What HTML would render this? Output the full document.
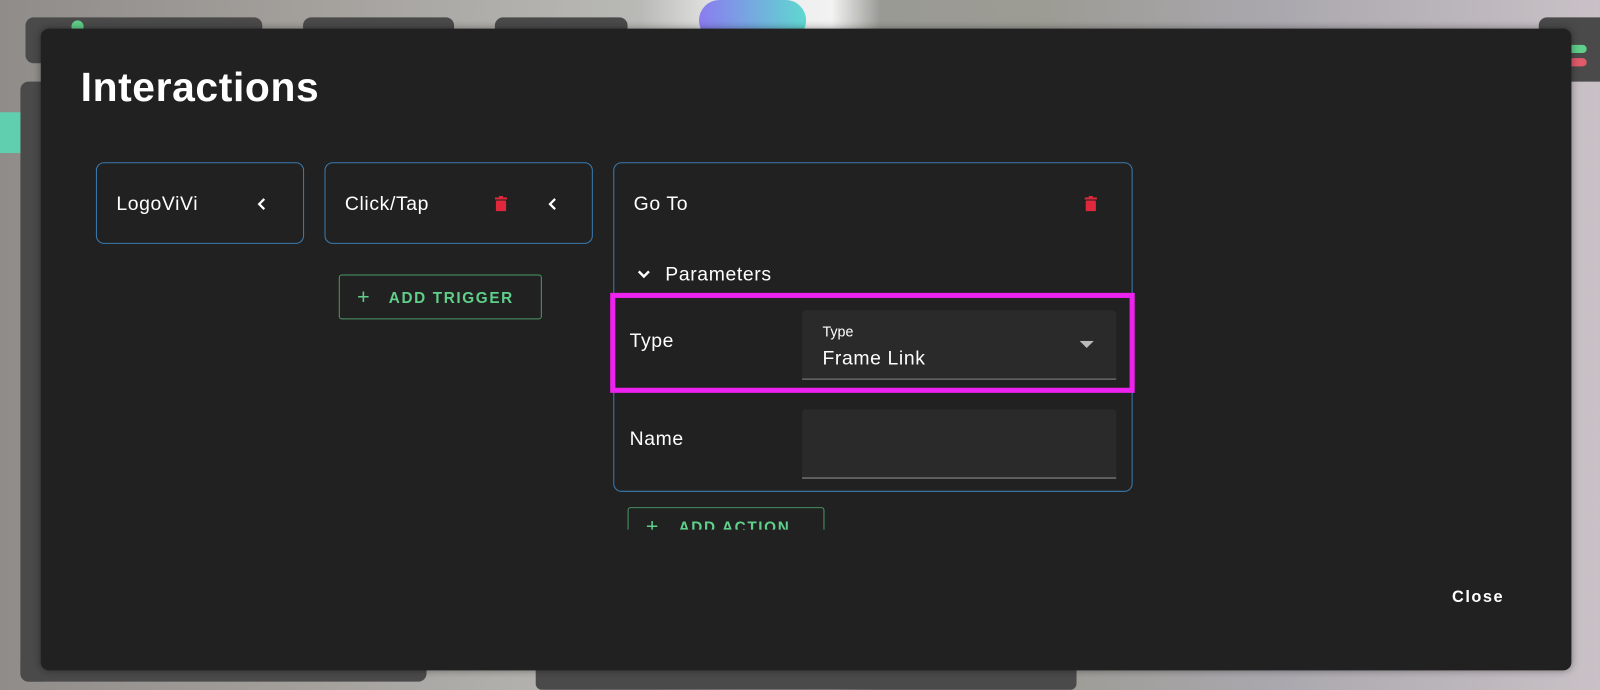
<!DOCTYPE html>
<html><head><meta charset="utf-8"><style>
*{box-sizing:border-box;margin:0;padding:0}
body{width:1600px;height:683px;overflow:hidden;position:relative;font-family:"Liberation Sans",sans-serif;
background:linear-gradient(90deg,#8f8c89 0%,#a4a19d 20%,#b9b9b6 40%,#e6e6e6 45%,#f2f2f2 52%,#9a9a95 55%,#9c9b94 65%,#aaa8ae 80%,#c9c1c6 100%);}
#w{position:absolute;left:0;top:0;width:1568px;height:670px;transform:scale(1.0204);transform-origin:0 0}
.abs{position:absolute}
.modal{left:40px;top:28px;width:1500px;height:629px;background:#212121;border-radius:8px;box-shadow:0 0 8px rgba(0,0,0,.4)}
.card{position:absolute;border:1px solid #3a7bb0;border-radius:8px;background:#212121;color:#fff;font-size:19px}
.t{position:absolute;color:#fff;white-space:nowrap}
.btn{position:absolute;border:1px solid #4a9a68;border-radius:3px}
.trash{position:absolute;width:12px;height:15px}
</style></head><body><div id="w">
<div class="abs" style="left:25px;top:17px;width:232px;height:45px;background:#4a4a4a;border-radius:8px"></div>
<div class="abs" style="left:70px;top:20px;width:12px;height:12px;background:#5fcf8a;border-radius:6px"></div>
<div class="abs" style="left:297px;top:17px;width:148px;height:45px;background:#4a4a4a;border-radius:8px"></div>
<div class="abs" style="left:485px;top:17px;width:130px;height:45px;background:#4a4a4a;border-radius:8px"></div>
<div class="abs" style="left:685px;top:0;width:105px;height:40px;background:linear-gradient(90deg,#8b7cf0,#5fd8d0);border-radius:50px"></div>
<div class="abs" style="left:1508px;top:17px;width:70px;height:63px;background:#4a4a4a;border-radius:8px"></div>
<div class="abs" style="left:1535px;top:44px;width:20px;height:8px;background:#5fcf8a;border-radius:4px"></div>
<div class="abs" style="left:1535px;top:57px;width:20px;height:8px;background:#e05a6a;border-radius:4px"></div>
<div class="abs" style="left:20px;top:80px;width:30px;height:588px;background:#4a4a4a;border-radius:8px"></div>
<div class="abs" style="left:0;top:110px;width:20px;height:40px;background:#5fcfb0"></div>
<div class="abs" style="left:20px;top:640px;width:398px;height:28px;background:#4a4a4a;border-radius:8px"></div>
<div class="abs" style="left:525px;top:640px;width:530px;height:36px;background:#4a4a4a;border-radius:6px"></div>

<div class="abs modal"></div>
<div class="t" style="left:79px;top:64px;font-size:40px;font-weight:bold;letter-spacing:.6px">Interactions</div>

<div class="card" style="left:94px;top:159px;width:204px;height:80px"></div>
<div class="t" style="left:114px;top:190px;font-size:19px;letter-spacing:.6px">LogoViVi</div>
<svg class="abs" style="left:252px;top:194px" width="10" height="12"><path d="M7 1 L2 6 L7 11" stroke="#fff" stroke-width="2.2" fill="none"/></svg>

<div class="card" style="left:318px;top:159px;width:263px;height:80px"></div>
<div class="t" style="left:338px;top:190px;font-size:19px;letter-spacing:.6px">Click/Tap</div>
<svg class="trash" style="left:485px;top:192px" viewBox="0 0 12 15"><rect x="0" y="1.5" width="12" height="2" fill="#e0283c"/><rect x="4" y="0" width="4" height="2" fill="#e0283c"/><rect x="1" y="4.5" width="10" height="10.5" rx="1" fill="#e0283c"/></svg>
<svg class="abs" style="left:537px;top:194px" width="10" height="12"><path d="M7 1 L2 6 L7 11" stroke="#fff" stroke-width="2.2" fill="none"/></svg>

<div class="btn" style="left:332px;top:269px;width:199px;height:44px"></div>
<div class="t" style="left:350px;top:280px;font-size:21px;color:#5fcf8a">+</div>
<div class="t" style="left:381px;top:284px;font-size:15px;font-weight:bold;letter-spacing:1.6px;color:#5fcf8a">ADD TRIGGER</div>

<div class="card" style="left:601px;top:159px;width:509px;height:323px"></div>
<div class="t" style="left:621px;top:190px;font-size:19px;letter-spacing:.6px">Go To</div>
<svg class="trash" style="left:1063px;top:192px" viewBox="0 0 12 15"><rect x="0" y="1.5" width="12" height="2" fill="#e0283c"/><rect x="4" y="0" width="4" height="2" fill="#e0283c"/><rect x="1" y="4.5" width="10" height="10.5" rx="1" fill="#e0283c"/></svg>
<svg class="abs" style="left:624px;top:264px" width="14" height="10" viewBox="0 0 14 10"><path d="M2 2 L7 7 L12 2" stroke="#fff" stroke-width="2.4" fill="none"/></svg>
<div class="t" style="left:652px;top:259px;font-size:19px;letter-spacing:.6px">Parameters</div>

<div class="abs" style="left:598px;top:287px;width:514px;height:98px;border:5px solid #ee22ee"></div>
<div class="t" style="left:617px;top:324px;font-size:19px;letter-spacing:.6px">Type</div>
<div class="abs" style="left:786px;top:304px;width:308px;height:68px;background:#2a2a2a;border-radius:4px 4px 0 0;border-bottom:1px solid #9a9a9a"></div>
<div class="t" style="left:806px;top:317px;font-size:14px">Type</div>
<div class="t" style="left:806px;top:341px;font-size:19px;letter-spacing:.6px">Frame Link</div>
<svg class="abs" style="left:1058px;top:334px" width="14" height="8"><path d="M0 0 L14 0 L7 7 Z" fill="#bbb"/></svg>

<div class="t" style="left:617px;top:420px;font-size:19px;letter-spacing:.6px">Name</div>
<div class="abs" style="left:786px;top:401px;width:308px;height:68px;background:#2a2a2a;border-radius:4px 4px 0 0;border-bottom:1px solid #9a9a9a"></div>

<div class="abs" style="left:615px;top:497px;width:193px;height:22px;overflow:hidden">
 <div style="position:absolute;left:0;top:0;width:193px;height:44px;border:1px solid #4a9a68;border-radius:3px"></div>
 <div style="position:absolute;left:18px;top:8px;font-size:21px;color:#5fcf8a">+</div>
 <div style="position:absolute;left:50px;top:12px;font-size:15px;font-weight:bold;letter-spacing:1.6px;color:#5fcf8a;white-space:nowrap">ADD ACTION</div>
</div>

<div class="t" style="left:1423px;top:577px;font-size:16px;font-weight:bold;letter-spacing:1.5px">Close</div>
</div></body></html>
